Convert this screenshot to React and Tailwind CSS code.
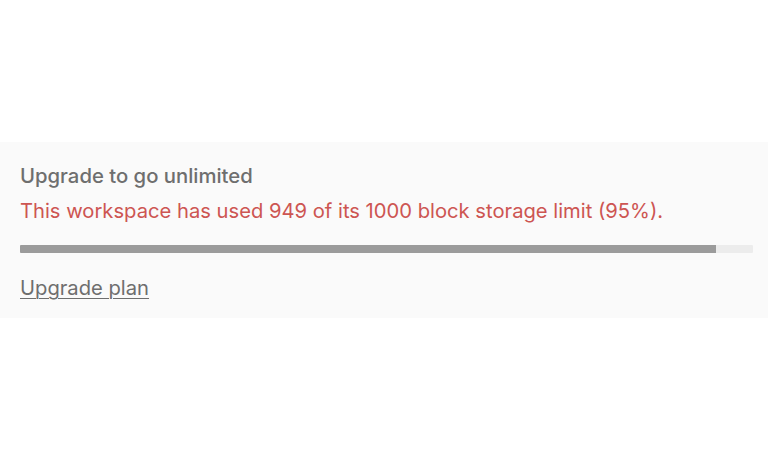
export default function App() {
  return (
    <div className="w-[768px] h-[461px] bg-white flex flex-col" style={{ fontFamily: "Inter, 'Noto Sans', sans-serif" }}>
      <div className="h-[142px]" />
      <div className="h-[176px] bg-[#fafafa] px-[20px] pt-[22px] flex flex-col">
        <div className="text-[20.3px] leading-[24px] font-medium text-[#6e6e6e]">Upgrade to go unlimited</div>
        <div className="mt-[11px] text-[20.2px] leading-[24px] text-[#cd5552]">
          This workspace has used 949 of its 1000 block storage limit (95%).
        </div>
        <div className="mt-[22px] w-[733px] h-[8px] bg-[#ececec] rounded-[1px] overflow-hidden">
          <div className="h-full bg-[#9b9b9b]" style={{ width: "95%" }} />
        </div>
        <div className="mt-[23px]">
          <a className="text-[20.2px] leading-[24px] text-[#6e6e6e] underline underline-offset-[3px] decoration-1">Upgrade plan</a>
        </div>
      </div>
    </div>
  );
}
